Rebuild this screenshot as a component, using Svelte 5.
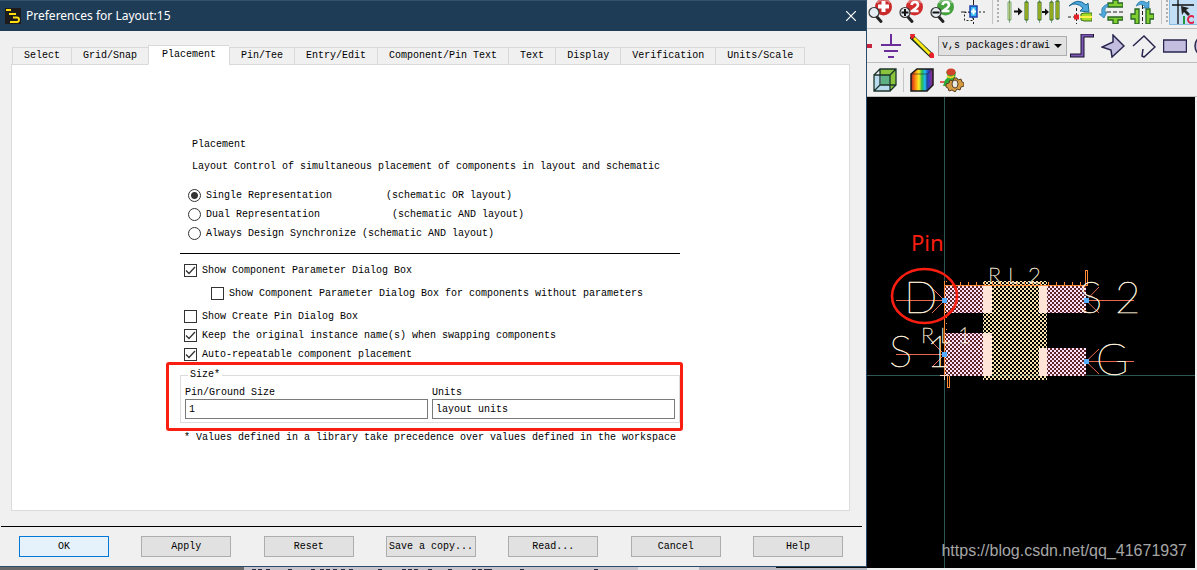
<script lang="ts">
  const tabs = [
    "Select",
    "Grid/Snap",
    "Placement",
    "Pin/Tee",
    "Entry/Edit",
    "Component/Pin Text",
    "Text",
    "Display",
    "Verification",
    "Units/Scale"
  ];
  const modes = [
    { id: "single", label: "Single Representation         (schematic OR layout)" },
    { id: "dual", label: "Dual Representation            (schematic AND layout)" },
    { id: "sync", label: "Always Design Synchronize (schematic AND layout)" }
  ];
  const actions = ["OK", "Apply", "Reset", "Save a copy...", "Read...", "Cancel", "Help"];
  const ticks = [952, 960, 968, 976, 984, 992, 1000, 1008, 1016, 1024, 1032, 1040, 1048, 1056, 1064, 1072, 1080];
  const scraps = [252, 258, 266, 288, 311, 320, 326, 333, 341, 349, 378, 402, 408, 414, 428, 448, 472, 478, 484, 488, 520, 594];

  let activeTab = $state("Placement");
  let mode = $state("single");
  let pinSize = $state("1");
  let units = $state("layout units");
  let options = $state([
    { label: "Show Component Parameter Dialog Box", checked: true, nested: false },
    { label: "Show Component Parameter Dialog Box for components without parameters", checked: false, nested: true },
    { label: "Show Create Pin Dialog Box", checked: false, nested: false },
    { label: "Keep the original instance name(s) when swapping components", checked: true, nested: false },
    { label: "Auto-repeatable component placement", checked: true, nested: false }
  ]);
</script>

{#snippet lens(color, sign, digit)}
  <svg class="icon" viewBox="0 0 24 24" aria-hidden="true">
    <circle cx="15.5" cy="7" r="8.5" fill={color} />
    <path d="M9 3a8 8 0 0 1 13 0" fill="none" stroke="#fff" stroke-opacity=".35" stroke-width="2" />
    {#if digit}
      <path d="M12.5 5q.5-3 3.500-3t3 3q0 2-6 6h6.500" fill="none" stroke="#fff" stroke-width="2.600" />
    {:else}
      <path d="M15.500 1v11M10 6.500h11" stroke="#fff" stroke-width="4" />
    {/if}
    <path d="M9 17l4 4.500" stroke="#222" stroke-width="3" stroke-linecap="round" />
    <circle cx="6" cy="12.500" r="5" fill="#e5edf2" stroke="#333" stroke-width="1.200" />
    {#if sign}
      <path d={sign === "+" ? "M6 9v7M2.500 12.500h7" : "M2.500 12.500h7"} stroke="#111" stroke-width="2" />
    {/if}
  </svg>
{/snippet}

<div class="screen">
  <div class="left">
    <section class="dialog" aria-label="Preferences for Layout:15">
      <header>
        <svg class="logo" viewBox="0 0 16 16" aria-hidden="true">
          <path d="M0 0h16v16H0z" fill="#1d1b1c" />
          <path d="M1 2h5M4 6h7M8 9.500h4q2 0 2 2.200T12 14H5" fill="none" stroke="#ffdf10" stroke-width="1.900" />
        </svg>
        <span>Preferences for Layout:15</span>
        <button class="close" aria-label="Close">
          <svg viewBox="0 0 10 10" aria-hidden="true"><path d="M0 0l10 10M10 0L0 10" stroke="#fff" stroke-width="1.200" /></svg>
        </button>
      </header>

      <div class="tabs" role="tablist">
        {#each tabs as tab}
          <button
            role="tab"
            class:active={tab === activeTab}
            aria-selected={tab === activeTab}
            onclick={() => (activeTab = tab)}
          >{tab}</button>
        {/each}
      </div>

      <div class="panel">
        <form>
          <h2>Placement</h2>
          <p class="intro">Layout Control of simultaneous placement of components in layout and schematic</p>
          <div class="modes">
            {#each modes as item}
              <label><input type="radio" name="mode" value={item.id} bind:group={mode} />{item.label}</label>
            {/each}
          </div>
          <hr />
          {#each options as option}
            <label class="option" class:nested={option.nested}>
              <input type="checkbox" bind:checked={option.checked} />
              <svg viewBox="0 0 13 13" aria-hidden="true"><path d="M2 6.500l3 3 6-6.500" fill="none" stroke="#333" stroke-width="1.300" /></svg>
              {option.label}
            </label>
          {/each}
          <div class="size">
            <fieldset>
              <legend>Size*</legend>
              <div class="fields">
                <label>Pin/Ground Size<input type="text" bind:value={pinSize} /></label>
                <label>Units<input type="text" bind:value={units} /></label>
              </div>
            </fieldset>
            <div class="mark"></div>
          </div>
          <p class="note">* Values defined in a library take precedence over values defined in the workspace</p>
        </form>
      </div>

      <footer>
        {#each actions as action, i}
          <button class:primary={i === 0}>{action}</button>
        {/each}
      </footer>
    </section>
    <svg class="behind" viewBox="0 0 867 3" preserveAspectRatio="none" aria-hidden="true">
      <path d="M0 0h244v3H0z" fill="#686868" />
      <path d="M244 0h394v3H244z" fill="#c6c3cb" />
      <path d="M638 0h61v3h-61z" fill="#e4e4e6" />
      <path d="M699 0h168v3H699z" fill="#b9b7bf" />
      <path d="M776 0h91v1h-91z" fill="#111" />
      {#each scraps as x}
        <path d="M{x} 2h4v1h-4z" fill="#2b2b45" />
      {/each}
    </svg>
  </div>

  <main>
    <div class="toolbar first">
      <button aria-label="Zoom in">{@render lens("#c92a2a", "", false)}</button>
      <button aria-label="Zoom in by 2">{@render lens("#d02d2d", "+", true)}</button>
      <button aria-label="Zoom out by 2">{@render lens("#45a23f", "-", true)}</button>
      <button aria-label="Center view">
        <svg class="icon" viewBox="0 0 24 24" aria-hidden="true">
          <path d="M0 12h24M12.500 0v24" stroke="#222" stroke-dasharray="5 2 2 2" />
          <path d="M3.500 12.500h8v8h-8z" fill="none" stroke="#222" stroke-dasharray="2 2" />
          <path d="M9 6h7v11H9z" fill="#35b7ef" stroke="#1c3fae" stroke-width="1.500" />
          <path d="M12.500 8.500v6M10 11.500h5" stroke="#fff" stroke-width="2" />
        </svg>
      </button>
      <i class="bar"></i><i class="grip"></i>
      <button aria-label="Move edge">
        <svg class="icon" viewBox="0 0 24 24" aria-hidden="true">
          <path d="M2 2h3v18H2z" fill="#e9ec9b" stroke="#78a77a" />
          <path d="M19 2h3v18h-3z" fill="#fcec16" stroke="#27642d" />
          <path d="M3.500 0v23M20.500 0v23" stroke="#27642d" stroke-opacity=".5" />
          <path d="M8 11.500h5" stroke="#111" stroke-width="2" /><path d="M12 7.500l4.500 4-4.500 4z" fill="#111" />
        </svg>
      </button>
      <button aria-label="Copy edge">
        <svg class="icon" viewBox="0 0 24 24" aria-hidden="true">
          <path d="M1 2h3v18H1zM13 2h3v18h-3zM19 1h3v18h-3z" fill="#fcec16" stroke="#27642d" />
          <path d="M2.500 0v23M14.500 0v23M20.500 0v20" stroke="#27642d" stroke-opacity=".5" />
          <path d="M5 12h4" stroke="#111" stroke-width="2" /><path d="M8 8.500l4 3.500-4 3.500z" fill="#111" />
        </svg>
      </button>
      <button aria-label="Rotate">
        <svg class="icon" viewBox="0 0 24 24" aria-hidden="true">
          <path d="M1 6Q10-3 18 5l2-2 1 9-9-1 3-3Q8 1 1 6z" fill="#4fa8dc" stroke="#176996" />
          <path d="M0 17h8M8.500 8v16" stroke="#222" stroke-dasharray="3 2" />
          <path d="M13 14l3-1h8v8h-8l-3-1z" fill="#a9dc28" stroke="#356f1d" /><path d="M12 17h12" stroke="#fff04a" stroke-width="2" />
          <path d="M6 14.500h5v5H6z" fill="#e5222a" />
        </svg>
      </button>
      <button aria-label="Mirror vertically">
        <svg class="icon" viewBox="0 0 24 24" aria-hidden="true">
          <path d="M14 0h5v3h5v4H9V3h5zM9 17h15v3h-5v4h-5v-4H9z" fill="#80cf2e" stroke="#286525" stroke-width="1.300" />
          <path d="M8 12h16" stroke="#222" stroke-dasharray="4 2" />
          <path d="M9 4Q1 6 3 14H0l5 4 3-6H6q-1-4 3-6z" fill="#4fa8dc" stroke="#176996" stroke-width=".6" />
        </svg>
      </button>
      <button aria-label="Mirror horizontally">
        <svg class="icon" viewBox="0 0 24 24" aria-hidden="true">
          <path d="M5 9h4v15H5v-5H1v-5h4zM16 9h4v5h4v5h-4v5h-4z" fill="#80cf2e" stroke="#286525" stroke-width="1.300" />
          <path d="M12.500 5v19" stroke="#222" stroke-dasharray="4 2" />
          <path d="M6 6q4-8 11-3l2-2v7h-6l2-2q-5-3-9 0z" fill="#4fa8dc" stroke="#176996" stroke-width=".6" />
        </svg>
      </button>
      <i class="bar"></i><i class="grip"></i>
      <button class="pressed" aria-label="Snap to origin">
        <svg class="icon" viewBox="0 0 24 24" aria-hidden="true">
          <path d="M2 5h22M8 0v24" stroke="#111" stroke-width="1.300" />
          <path d="M11 6l8 2-3 2 4 4-2 2-4-4-2 3z" fill="#222" />
          <path d="M14 16v8" stroke="#24963f" stroke-width="2" />
          <circle cx="21.500" cy="19.500" r="3.500" fill="none" stroke="#df214a" stroke-width="2" />
        </svg>
      </button>
    </div>

    <div class="toolbar second">
      <i class="stub"></i>
      <button aria-label="Ground">
        <svg class="icon" viewBox="0 0 24 24" aria-hidden="true">
          <path d="M12 0v10M2 11h20M5 17h14M9 23h6" stroke="#6a2d99" stroke-width="2" />
        </svg>
      </button>
      <button aria-label="Wire">
        <svg class="icon" viewBox="0 0 24 24" aria-hidden="true">
          <path d="M1 2l21 20" stroke="#142d16" stroke-width="5" /><path d="M4 4l16 16" stroke="#ffe919" stroke-width="3" />
          <path d="M0 0h5l-1 4-3 1zM19 20l3-2 2 2v4h-4z" fill="#e9222b" />
        </svg>
      </button>
      <div class="layer">
        <select aria-label="Layer"><option>v,s packages:drawi</option></select>
        <svg viewBox="0 0 8 4" aria-hidden="true"><path d="M0 0h8L4 4z" /></svg>
      </div>
      <button aria-label="Path">
        <svg class="icon" viewBox="0 0 24 24" aria-hidden="true">
          <path d="M0 21.500h12.500v-20H24" fill="none" stroke="#17132d" stroke-width="4" /><path d="M1 21.500h11.500v-20H23" fill="none" stroke="#7e56b4" stroke-width="2" />
        </svg>
      </button>
      <button aria-label="Polygon">
        <svg class="icon" viewBox="0 0 24 24" aria-hidden="true">
          <path d="M12 1l11 11-12 11-1-7-9-3 11-5z" fill="#c3bedf" stroke="#29264f" stroke-width="1.500" />
        </svg>
      </button>
      <button aria-label="Polyline">
        <svg class="icon" viewBox="0 0 24 24" aria-hidden="true">
          <path d="M1 12l11-10 11 11-11 10-2-1 1-7" fill="none" stroke="#29264f" stroke-width="1.500" />
        </svg>
      </button>
      <button aria-label="Rectangle">
        <svg class="icon" viewBox="0 0 24 24" aria-hidden="true">
          <path d="M.500 6h23v12H.500z" fill="#c3bedf" stroke="#29264f" stroke-width="1.500" />
        </svg>
      </button>
      <button aria-label="Circle">
        <svg class="icon" viewBox="0 0 24 24" aria-hidden="true"><circle cx="12" cy="12" r="11" fill="#c3bedf" stroke="#29264f" stroke-width="1.500" /></svg>
      </button>
    </div>

    <div class="toolbar third">
      <button aria-label="3D view">
        <svg class="icon" viewBox="0 0 24 24" aria-hidden="true">
          <path d="M1 7h16v16H1z" fill="#b8dced" /><path d="M7 1h16v16l-6 6V7H7z" fill="#8ac43c" /><path d="M8 7h9v10H8z" fill="#5cb083" />
          <path d="M1 7h16v16H1zM1 7l6-6h16v16l-6 6M17 7l6-6M7 1v16h16M7 17l-6 6" fill="none" stroke="#1c352a" stroke-width="1.300" />
        </svg>
      </button>
      <i class="bar"></i>
      <button aria-label="Field view">
        <svg class="icon" viewBox="0 0 24 24" aria-hidden="true">
          <defs>
            <linearGradient id="rainbow">
              <stop offset="0" stop-color="#c11e23" /><stop offset=".2" stop-color="#ff8c10" /><stop offset=".36" stop-color="#ffee27" />
              <stop offset=".5" stop-color="#25b84b" /><stop offset=".63" stop-color="#20bbed" /><stop offset=".78" stop-color="#2641c9" /><stop offset="1" stop-color="#a82a7a" />
            </linearGradient>
          </defs>
          <path d="M1 6l6-5h16v16l-6 6H1z" fill="url(#rainbow)" stroke="#1a1a1a" stroke-width="1.500" /><path d="M1 6h16v17M17 6l6-5" fill="none" stroke="#222" stroke-opacity=".6" />
        </svg>
      </button>
      <button aria-label="Simulation setup">
        <svg class="icon" viewBox="0 0 24 24" aria-hidden="true">
          <path d="M0 14h7" stroke="#d33" stroke-width="1.500" />
          <path d="M3 18l2-6 3-3-2-5q4-5 10 0l-1 6-4 8z" fill="#2cad38" /><ellipse cx="11" cy="4" rx="4.500" ry="3.500" fill="#d1442b" /><path d="M7 8q4 3 7 0" stroke="#ead329" stroke-width="2" fill="none" />
          <path d="M14 10h3l1 2 3-1 1 3 2 1v3l-3 1-1 3-3-1-2 3-3-2-3 1-1-3-2-1v-3l3-1 1-3 3 1z" fill="#d69a43" stroke="#57411f" />
          <ellipse cx="15" cy="16" rx="3" ry="4" fill="#e9e8e3" stroke="#57411f" />
        </svg>
      </button>
    </div>

    <div class="canvas">
      <svg viewBox="867 97 328 471" preserveAspectRatio="xMinYMin slice" role="img" aria-label="Layout drawing">
        <defs>
          <pattern id="pink" width="4" height="4" patternUnits="userSpaceOnUse">
            <path d="M0 0h4v4H0z" fill="#5c2627" /><path d="M0 0h2v2H0zM2 2h2v2H2z" fill="#ffe1fb" />
          </pattern>
          <pattern id="sand" width="4" height="4" patternUnits="userSpaceOnUse">
            <path d="M0 0h2v2H0zM2 2h2v2H2z" fill="#f6e2ad" />
          </pattern>
        </defs>
        <g shape-rendering="crispEdges">
          <path d="M944.500 97v471M867 375.500h328" stroke="#2d5754" />
          <path d="M983 281h64v99h-64z" fill="url(#sand)" />
          <path d="M945 286h38v27h-38zM945 333h38v43h-38zM1047 286h39v27h-39zM1047 348h39v28h-39z" fill="url(#pink)" />
          <path d="M983 286h9v27h-9zM983 333h9v43h-9zM1039 286h8v27h-8zM1039 348h8v28h-8z" fill="#ffe4d8" />
          <path d="M944.500 281v95M944 285.500h143M947.500 376v11.500h2v-11.500M1085.500 285v-14.500h2v15" fill="none" stroke="#ff8b38" />
          {#each ticks as x}
            <path d="M{x}.500 282v4" stroke="#ff8b38" />
          {/each}
          <path d="M946.500 281v95" stroke="#ff8b38" stroke-dasharray="1 5" />
          <path d="M940 375.500h9M944.500 375v5" stroke="#ffd9bd" />
        </g>
        <g class="arrows">
          <path d="M896 300.500h49M932 288l12.500 12.500L932 313" />
          <path d="M896 354.500h49M932 342l12.500 12.500L932 367" />
          <path d="M1134 300.500h-48M1099 287l-13 13.500 13 12.500" />
          <path d="M1134 361.500h-48M1099 349l-13 12.500 13 12.500" />
        </g>
        <g class="pins">
          <text x="904" y="313">D</text>
          <text x="889 926" y="367">S1</text>
          <text x="1079 1115" y="313">S2</text>
          <text x="1096" y="375">G</text>
        </g>
        <g class="refs">
          <text x="988 1008 1028" y="283">RL2</text>
          <text x="921 940 958" y="343">RL1</text>
        </g>
        <path d="M942 298h5v5h-5zM942 352h5v5h-5zM1084 298h5v5h-5zM1084 359h5v5h-5z" fill="#55adff" />
        <ellipse cx="924.500" cy="296" rx="32.500" ry="27" fill="none" stroke="#fa1e10" stroke-width="2.600" />
        <text class="callout" x="911" y="251">Pin</text>
      </svg>
      <span class="watermark">https://blog.csdn.net/qq_41671937</span>
    </div>
  </main>
</div>

<style>
  :global(body) {
    background: #f0f0f0;
  }

  .screen {
    display: grid;
    grid-template-columns: 867fr 330fr;
    min-height: 100vh;
    overflow: hidden;
    font: 10px/12px "Liberation Mono", monospace;
    color: #000;
  }

  button,
  input,
  select {
    font: inherit;
    color: inherit;
    margin: 0;
    box-sizing: border-box;
  }

  .left,
  .dialog,
  main {
    display: flex;
    flex-direction: column;
    min-width: 0;
  }

  .dialog {
    flex: 1;
    background: #f0f0f0;
    border-right: 1px solid #2b4b68;
    border-bottom: 1px solid #2b4b68;
  }

  header {
    display: flex;
    align-items: center;
    gap: 5px;
    height: 31px;
    padding: 0 10px 0 5px;
    box-sizing: border-box;
    border-top: 1px solid #35526a;
    background: #1f3c56;
    color: #fff;
    font: 12px/16px "Noto Sans", sans-serif;
  }

  .logo {
    width: 16px;
    height: 16px;
  }

  .close {
    display: flex;
    margin-left: auto;
    padding: 0;
    border: 0;
    background: none;
  }

  .close svg {
    width: 10px;
    height: 10px;
  }

  .tabs {
    display: flex;
    align-items: flex-end;
    height: 34px;
    margin: 0 12px;
    position: relative;
    z-index: 1;
  }

  .tabs button {
    height: 18px;
    padding: 0 11px;
    border: 1px solid #d9d9d9;
    border-width: 1px 0 1px 1px;
    background: #f0f0f0;
    white-space: nowrap;
  }

  .tabs button:last-child {
    border-right-width: 1px;
  }

  .tabs .active {
    height: 20px;
    padding: 0 13px;
    border-bottom-color: #fff;
    background: #fff;
  }

  .panel {
    flex: 1;
    margin: -1px 16px 0 11px;
    padding: 69px 1px 0 0;
    border: 1px solid #dcdcdc;
    background: #fff;
  }

  form {
    max-width: 500px;
    margin: 0 auto;
  }

  h2,
  p {
    margin: 0;
    font: inherit;
    white-space: nowrap;
  }

  h2,
  .intro {
    padding-left: 12px;
    line-height: 22px;
  }

  .modes {
    margin: 8px 0 10px 8px;
  }

  .modes label,
  .option {
    display: flex;
    align-items: center;
    gap: 5px;
    height: 19px;
    white-space: pre;
  }

  .modes input,
  .option input {
    appearance: none;
    flex: none;
    width: 13px;
    height: 13px;
    border: 1px solid #333;
    background: #fff;
  }

  .modes input {
    border-radius: 50%;
  }

  .modes input:checked {
    background: radial-gradient(circle, #333 3px, #fff 4px);
  }

  hr {
    height: 1px;
    margin: 0 0 7px;
    border: 0;
    background: #000;
  }

  .option {
    margin-left: 4px;
    white-space: nowrap;
  }

  .option svg {
    width: 13px;
    height: 13px;
    margin-left: -18px;
    visibility: hidden;
  }

  .option input:checked + svg {
    visibility: visible;
  }

  .nested {
    margin: 4px 0 4px 31px;
  }

  .size {
    position: relative;
    margin: 5px 0 9px;
  }

  fieldset {
    margin: 0;
    padding: 6px 4px 3px;
    border: 1px solid #dcdcdc;
    min-width: 0;
  }

  legend {
    margin-left: 3px;
    padding: 0 2px;
  }

  .fields {
    display: grid;
    grid-template-columns: 1fr 1fr;
    gap: 4px;
  }

  .fields input {
    display: block;
    width: 100%;
    height: 20px;
    padding: 0 3px;
    border: 1px solid #7a7a7a;
    background: #fff;
  }

  .mark {
    position: absolute;
    inset: -7px -3px -8px -14px;
    border: 3px solid #fa1e10;
    border-radius: 3px;
    pointer-events: none;
  }

  .note {
    padding-left: 4px;
  }

  footer {
    display: flex;
    justify-content: space-between;
    margin: 15px 4px 9px 1px;
    padding: 9px 19px 0 18px;
    border-top: 1px solid #000;
  }

  footer button {
    width: 90px;
    height: 21px;
    padding: 0;
    border: 1px solid #adadad;
    background: #e1e1e1;
    white-space: nowrap;
  }

  footer .primary {
    border-color: #0078d7;
    background: #e5f1fb;
  }

  .behind {
    display: block;
    width: 100%;
    height: 3px;
  }

  main {
    overflow: hidden;
    background: #f0f0f0;
  }

  .toolbar {
    display: flex;
    align-items: center;
    gap: 7px;
    height: 34px;
    box-sizing: border-box;
    padding-left: 6px;
    border-bottom: 1px solid #bdbdbd;
    overflow: hidden;
  }

  .toolbar button {
    flex: none;
    display: flex;
    padding: 0;
    border: 0;
    background: none;
  }

  .icon {
    width: 24px;
    height: 24px;
  }

  .first {
    height: 29px;
    padding: 0 0 4px 1px;
  }

  .second {
    padding-left: 0;
  }

  .third {
    gap: 6px;
  }

  .bar,
  .grip {
    flex: none;
    width: 1px;
    height: 24px;
    background: #c4c4c4;
  }

  .grip {
    width: 2px;
    margin-left: -3px;
    background: repeating-linear-gradient(#b0b0b0 0 2px, #f0f0f0 2px 4px);
  }

  .toolbar .pressed {
    margin-left: -5px;
    padding-right: 4px;
    background: #c3dff5;
    box-shadow: 0 0 0 1px #8abce2;
  }

  .stub {
    flex: none;
    width: 5px;
    height: 4px;
    background: #c7253f;
  }

  .layer {
    flex: none;
    position: relative;
    width: 129px;
    margin: 0 -4px 0 -3px;
  }

  .layer select {
    display: block;
    appearance: none;
    width: 100%;
    height: 20px;
    padding: 0 16px 0 3px;
    border: 1px solid #adadad;
    border-radius: 0;
    background: #e1e1e1;
  }

  .layer svg {
    position: absolute;
    right: 5px;
    top: 8px;
    width: 8px;
    height: 4px;
    pointer-events: none;
  }

  .canvas {
    flex: 1;
    position: relative;
    margin: 0 2px 2px 0;
    background: #000;
  }

  .canvas svg {
    position: absolute;
    width: 100%;
    height: 100%;
  }

  .arrows {
    fill: none;
    stroke: #e8694e;
  }

  .pins,
  .refs {
    fill: #fff0dc;
    stroke: #fff0dc;
    stroke-width: 0.5px;
    font: 100 44px Lato, sans-serif;
  }

  .refs {
    font-size: 22px;
  }

  .callout {
    fill: #fa1e10;
    font: 22px "Noto Sans", sans-serif;
  }

  .watermark {
    position: absolute;
    right: 8px;
    bottom: 7px;
    color: #a6a6a6;
    font: 16px/20px "Liberation Sans", sans-serif;
  }
</style>
